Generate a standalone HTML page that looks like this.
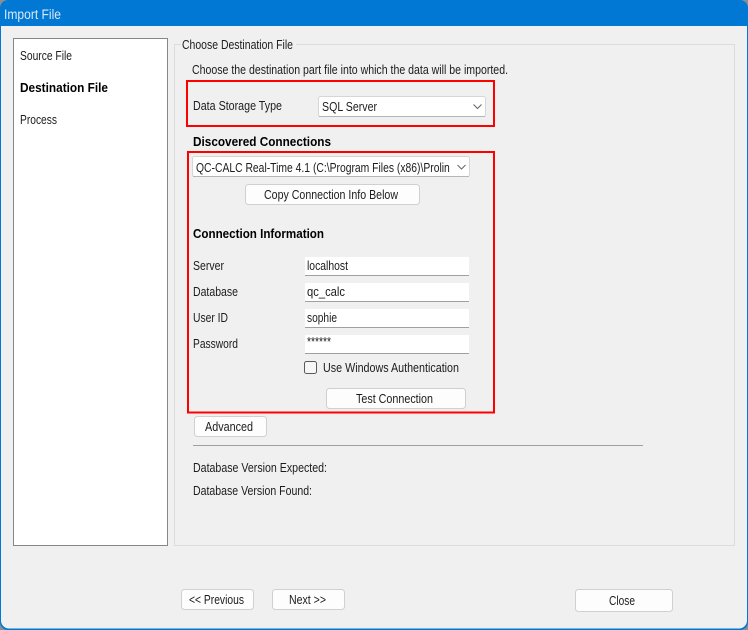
<!DOCTYPE html>
<html><head><meta charset="utf-8"><style>
html,body{margin:0;padding:0;width:748px;height:630px;overflow:hidden;background:#fff}
svg{display:block}
text{font-family:"Liberation Sans",sans-serif;font-size:12.5px;fill:#1c1c1c}
.b{font-weight:bold;fill:#000}
</style></head><body>
<svg width="748" height="630" viewBox="0 0 748 630" xmlns="http://www.w3.org/2000/svg">
<defs><clipPath id="c"><rect x="196" y="158" width="254" height="18"/></clipPath></defs>
<rect width="748" height="630" fill="#8a8f94"/>
<rect x="0" y="0" width="748" height="630" rx="8" fill="#0078d4"/>
<path d="M1 26H747V620a8 8 0 0 1-8 8.500H9a8 8 0 0 1-8-8.500Z" fill="#f0f0f0"/>
<text x="4" y="19" textLength="57" lengthAdjust="spacingAndGlyphs" style="font-size:13.500px;fill:#dce9f6">Import File</text>

<rect x="13.500" y="38.500" width="154" height="507" fill="#fff" stroke="#868686"/>
<text x="20" y="60" textLength="52" lengthAdjust="spacingAndGlyphs">Source File</text>
<text class="b" x="20" y="92" textLength="88" lengthAdjust="spacingAndGlyphs">Destination File</text>
<text x="20" y="124" textLength="37" lengthAdjust="spacingAndGlyphs">Process</text>

<path d="M181 44.500H174.500V545.500H734.500V44.500H296" fill="none" stroke="#dcdcdc"/>
<text x="182" y="49" textLength="111" lengthAdjust="spacingAndGlyphs">Choose Destination File</text>
<text x="192" y="74" textLength="316" lengthAdjust="spacingAndGlyphs">Choose the destination part file into which the data will be imported.</text>

<rect x="187" y="81" width="307" height="45" fill="none" stroke="#f00" stroke-width="2"/>
<text x="193" y="110" textLength="89" lengthAdjust="spacingAndGlyphs">Data Storage Type</text>
<rect x="318.500" y="96.500" width="167" height="20" rx="2" fill="#fff" stroke="#d6d6d6"/>
<path d="M319 116.500H485" stroke="#b5b5b5"/>
<text x="322" y="111" textLength="55" lengthAdjust="spacingAndGlyphs">SQL Server</text>
<path d="M473.500 104.500L477.500 108.500L481.500 104.500" fill="none" stroke="#666" stroke-width="1"/>

<text class="b" x="193" y="146" textLength="138" lengthAdjust="spacingAndGlyphs">Discovered Connections</text>
<rect x="188" y="152" width="306" height="260.500" fill="none" stroke="#f00" stroke-width="2"/>
<rect x="192.500" y="156.500" width="277" height="20" rx="2" fill="#fff" stroke="#d6d6d6"/>
<path d="M193 176.500H469" stroke="#b5b5b5"/>
<g clip-path="url(#c)"><text x="196" y="172" textLength="259" lengthAdjust="spacingAndGlyphs">QC-CALC Real-Time 4.1 (C:\Program Files (x86)\Prolink</text></g>
<path d="M457.500 165L461.500 169L465.500 165" fill="none" stroke="#666" stroke-width="1"/>

<rect x="245.500" y="184.500" width="174" height="20" rx="3" fill="#fdfdfd" stroke="#d0d0d0"/>
<text x="264" y="199" textLength="134" lengthAdjust="spacingAndGlyphs">Copy Connection Info Below</text>

<text class="b" x="193" y="238" textLength="131" lengthAdjust="spacingAndGlyphs">Connection Information</text>
<text x="193" y="270" textLength="31" lengthAdjust="spacingAndGlyphs">Server</text>
<text x="193" y="296" textLength="45" lengthAdjust="spacingAndGlyphs">Database</text>
<text x="193" y="322" textLength="35" lengthAdjust="spacingAndGlyphs">User ID</text>
<text x="193" y="348" textLength="45" lengthAdjust="spacingAndGlyphs">Password</text>

<rect x="305" y="257" width="164" height="18" fill="#fff"/><path d="M305 275.500H469" stroke="#a0a0a0"/>
<rect x="305" y="283" width="164" height="18" fill="#fff"/><path d="M305 301.500H469" stroke="#a0a0a0"/>
<rect x="305" y="309" width="164" height="18" fill="#fff"/><path d="M305 327.500H469" stroke="#a0a0a0"/>
<rect x="305" y="335" width="164" height="18" fill="#fff"/><path d="M305 353.500H469" stroke="#a0a0a0"/>
<text x="307" y="270" textLength="41" lengthAdjust="spacingAndGlyphs">localhost</text>
<text x="307" y="296" textLength="38" lengthAdjust="spacingAndGlyphs">qc_calc</text>
<text x="307" y="322" textLength="30" lengthAdjust="spacingAndGlyphs">sophie</text>
<text x="307" y="346" textLength="24" lengthAdjust="spacingAndGlyphs">******</text>

<rect x="304.500" y="361.500" width="12" height="12" rx="2" fill="#f7f7f7" stroke="#5a5a5a"/>
<text x="323" y="372" textLength="136" lengthAdjust="spacingAndGlyphs">Use Windows Authentication</text>

<rect x="326.500" y="388.500" width="139" height="20" rx="3" fill="#fdfdfd" stroke="#d0d0d0"/>
<text x="356" y="403" textLength="77" lengthAdjust="spacingAndGlyphs">Test Connection</text>

<rect x="194.500" y="416.500" width="72" height="20" rx="3" fill="#fdfdfd" stroke="#d0d0d0"/>
<text x="205" y="431" textLength="48" lengthAdjust="spacingAndGlyphs">Advanced</text>

<rect x="193" y="445" width="450" height="1" fill="#a0a0a0"/>
<text x="193" y="472" textLength="134" lengthAdjust="spacingAndGlyphs">Database Version Expected:</text>
<text x="193" y="495" textLength="119" lengthAdjust="spacingAndGlyphs">Database Version Found:</text>

<rect x="181.500" y="589.500" width="72" height="20" rx="3" fill="#fdfdfd" stroke="#d0d0d0"/>
<text x="189" y="604" textLength="55" lengthAdjust="spacingAndGlyphs">&lt;&lt; Previous</text>
<rect x="272.500" y="589.500" width="72" height="20" rx="3" fill="#fdfdfd" stroke="#d0d0d0"/>
<text x="289" y="604" textLength="37" lengthAdjust="spacingAndGlyphs">Next &gt;&gt;</text>
<rect x="575.500" y="589.500" width="97" height="22" rx="3" fill="#fdfdfd" stroke="#d0d0d0"/>
<text x="609" y="605" textLength="26" lengthAdjust="spacingAndGlyphs">Close</text>
</svg>
</body></html>
